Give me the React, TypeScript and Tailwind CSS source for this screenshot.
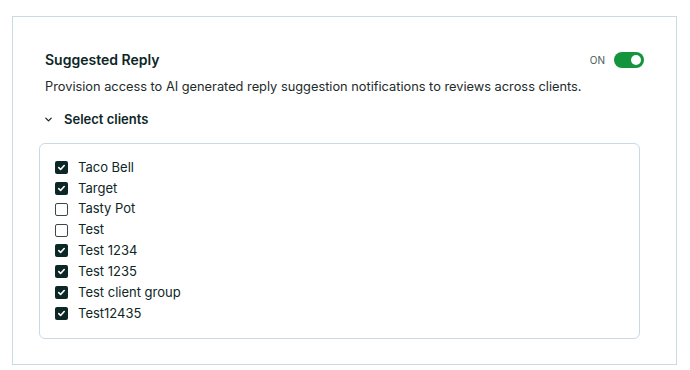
import { useState } from 'react'

type Client = { name: string; checked: boolean }

const initialClients: Client[] = [
  { name: 'Taco Bell', checked: true },
  { name: 'Target', checked: true },
  { name: 'Tasty Pot', checked: false },
  { name: 'Test', checked: false },
  { name: 'Test 1234', checked: true },
  { name: 'Test 1235', checked: true },
  { name: 'Test client group', checked: true },
  { name: 'Test12435', checked: true },
]

function Check({ on }: { on: boolean }) {
  if (!on) {
    return <span className="w-[13px] h-[13px] rounded-[2px] border-[1.5px] border-[#3a4848] bg-white shrink-0" />
  }
  return (
    <span className="w-[13px] h-[13px] rounded-[2px] bg-[#0d2626] flex items-center justify-center shrink-0">
      <svg width="9" height="9" viewBox="0 0 10 10" fill="none">
        <path d="M2 5.2l2 2 4-4.4" stroke="white" strokeWidth="1.8" strokeLinecap="round" strokeLinejoin="round" />
      </svg>
    </span>
  )
}

export default function App() {
  const [clients, setClients] = useState(initialClients)
  const [enabled, setEnabled] = useState(true)

  return (
    <div className="w-[690px] h-[370px] bg-white pt-4 pl-3 font-['Inter',sans-serif] text-[#0d2626]">
      <div className="w-[665px] h-[349px] border border-[#c7dbe6] pl-[26px] pr-[32px] pt-[33px]">
        <div className="flex items-center justify-between pl-[6px]">
          <h2 className="text-[14px] font-semibold leading-[20px]">Suggested Reply</h2>
          <div className="flex items-center gap-[9px]">
            <span className="text-[10px] text-[#4a5a5a]">ON</span>
            <button
              onClick={() => setEnabled(!enabled)}
              className={`w-[30px] h-[16px] rounded-full flex items-center px-[3px] ${enabled ? 'bg-[#14943c] justify-end' : 'bg-gray-300 justify-start'}`}
            >
              <span className="w-[10px] h-[10px] rounded-full bg-white" />
            </button>
          </div>
        </div>
        <p className="px-[6px] mt-[7px] text-[12.8px] leading-[20px] text-[#1d2b2b]">
          Provision access to AI generated reply suggestion notifications to reviews across clients.
        </p>
        <div className="px-[6px] mt-[12px] flex items-center gap-[11px]">
          <svg width="9" height="9" viewBox="0 0 10 10" fill="none" className="ml-[-1px]">
            <path d="M2 3.5l3 3 3-3" stroke="#0d2626" strokeWidth="1.4" strokeLinecap="round" strokeLinejoin="round" />
          </svg>
          <span className="text-[13px] font-semibold leading-[20px]">Select clients</span>
        </div>
        <div className="mt-[14px] mr-[4px] border border-[#c7dbe6] rounded-[6px] pl-[15px] pt-[13px] pb-[14px]">
          {clients.map((c, i) => (
            <label
              key={c.name}
              className="flex items-center gap-[10px] h-[20.86px] text-[13px] cursor-pointer"
              onClick={() => setClients(clients.map((x, j) => (j === i ? { ...x, checked: !x.checked } : x)))}
            >
              <Check on={c.checked} />
              <span>{c.name}</span>
            </label>
          ))}
        </div>
      </div>
    </div>
  )
}
